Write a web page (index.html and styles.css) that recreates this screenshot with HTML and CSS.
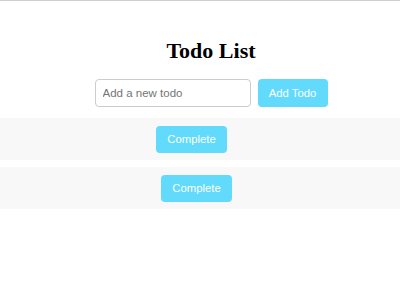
FILE: index.html
```html
<!DOCTYPE html>
<html>
<head>
<meta charset="utf-8">
<link rel="stylesheet" href="styles.css">
</head>
<body>
<div class="topline"></div>
<div class="app">
  <h1 class="title">Todo List</h1>
  <div class="form">
    <input class="field" type="text" placeholder="Add a new todo">
    <button class="btn add">Add Todo</button>
  </div>
</div>
<ul class="list">
  <li class="item"><button class="btn done first">Complete</button></li>
  <li class="item"><button class="btn done second">Complete</button></li>
</ul>
</body>
</html>
```
FILE: styles.css
```css
html, body {
  margin: 0;
  padding: 0;
  background: #ffffff;
}
body {
  font-family: "Liberation Sans", Arial, sans-serif;
}
.topline {
  height: 1px;
  background: #cfcfcf;
}
.app {
  padding-left: 22px;
  text-align: center;
}
.title {
  font-family: "Liberation Serif", "Times New Roman", serif;
  font-weight: bold;
  font-size: 22px;
  margin: 0;
  padding-top: 37px;
  line-height: 26px;
  color: #000;
}
.form {
  display: flex;
  justify-content: center;
  gap: 7px;
  margin-top: 15px;
}
.field {
  box-sizing: border-box;
  width: 156px;
  height: 28px;
  border: 1px solid #cccccc;
  border-radius: 4px;
  padding: 0 7px;
  font-family: "Liberation Sans", Arial, sans-serif;
  font-size: 11.5px;
  color: #333;
  outline: none;
}
.field::placeholder {
  color: #757575;
}
.btn {
  box-sizing: border-box;
  height: 28px;
  background: #61dafb;
  color: #ffffff;
  border: none;
  border-radius: 4px;
  font-family: "Liberation Sans", Arial, sans-serif;
  font-size: 11.3px;
  padding: 0;
  white-space: nowrap;
  text-align: center;
}
.add {
  width: 70px;
}
.list {
  list-style: none;
  margin: 11px 0 0;
  padding: 0;
  display: flex;
  flex-direction: column;
  gap: 7px;
}
.item {
  background: #f8f8f8;
  height: 42px;
  display: flex;
  align-items: center;
  justify-content: center;
}
.done {
  width: 71px;
  height: 27px;
}
.first {
  margin-right: 17px;
}
.second {
  margin-right: 7px;
}
```
